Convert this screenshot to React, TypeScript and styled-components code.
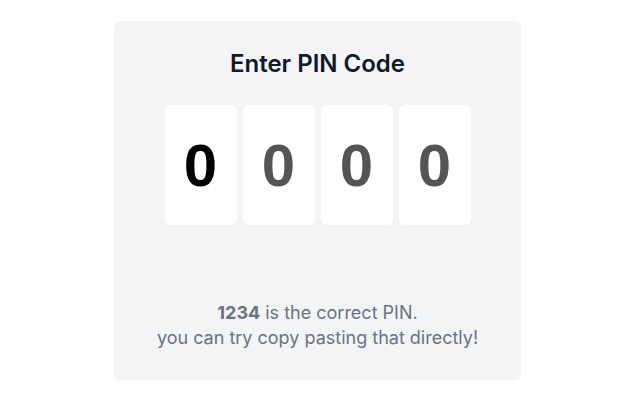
import React from "react";
import styled, { createGlobalStyle } from "styled-components";

const Global = createGlobalStyle`
  html, body { margin: 0; padding: 0; background: #ffffff; }
  body { font-family: Inter, "Noto Sans", sans-serif; }
`;

const Page = styled.div`
  display: flex;
  justify-content: center;
  padding: 21px 5px 0 0;
`;

const Card = styled.div`
  width: 407px;
  height: 359px;
  box-sizing: border-box;
  background: #f3f4f6;
  border-radius: 6px;
  padding: 28px 0 0;
  display: flex;
  flex-direction: column;
  align-items: center;
`;

const Title = styled.h1`
  margin: 0 0 26px;
  font-size: 24px;
  line-height: 30px;
  font-weight: 600;
  color: #111827;
`;

const Row = styled.div`
  display: flex;
  gap: 6px;
  margin-bottom: 75px;
`;

const Box = styled.div<{ $active?: boolean }>`
  width: 72px;
  height: 120px;
  background: #ffffff;
  border-radius: 6px;
  display: flex;
  align-items: center;
  justify-content: center;
  font-family: "Liberation Sans", Arial, sans-serif;
  font-weight: 700;
  font-size: 60px;
  color: ${(p) => (p.$active ? "#000000" : "#555555")};
`;

const Hint = styled.p`
  margin: 0;
  text-align: center;
  font-size: 18px;
  line-height: 25px;
  color: #6b7280;
`;

const Strong = styled.strong`
  font-weight: 700;
`;

export default function App() {
  const digits = ["0", "0", "0", "0"];
  return (
    <>
      <Global />
      <Page>
        <Card>
          <Title>Enter PIN Code</Title>
          <Row>
            {digits.map((d, i) => (
              <Box key={i} $active={i === 0}>
                {d}
              </Box>
            ))}
          </Row>
          <Hint>
            <Strong>1234</Strong> is the correct PIN.
            <br />
            you can try copy pasting that directly!
          </Hint>
        </Card>
      </Page>
    </>
  );
}
